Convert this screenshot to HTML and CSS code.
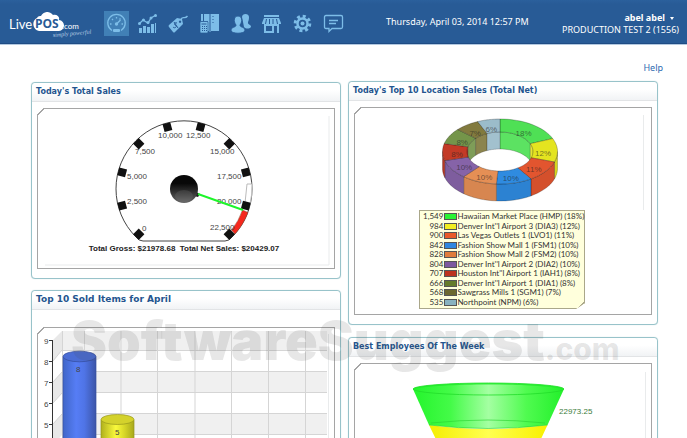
FILE: index.html
```html
<!DOCTYPE html>
<html lang="en">
<head>
<meta charset="utf-8">
<title>LivePOS Dashboard</title>
<link rel="stylesheet" href="styles.css">
</head>
<body>
<header class="topbar">
  <a class="logo" href="#" aria-label="LivePOS.com">
    <svg width="84" height="32" viewBox="8 9 84 32">
      <path fill="#fff" d="M39 31a7 7 0 0 1-2-13c1-2 3-2 4-2a7 7 0 0 1 12-1c4-1 7 2 6 5a5.500 5.500 0 0 1-1 11z"/>
      <text class="logo-word" x="9" y="29">Live</text>
      <text class="logo-pos" x="35" y="28">POS</text>
      <text class="logo-com" x="62" y="29">.com</text>
      <text class="logo-tag" x="53" y="37" transform="rotate(-5 53 37)">simply powerful</text>
    </svg>
  </a>
  <nav class="nav">
    <a class="nav-item active" href="#" aria-label="Dashboard"><svg viewBox="0 0 25 25"><path class="line" d="M8 19.500a8.700 8.700 0 1 1 9 0M12.500 13l4-4M6 13h1.500M17.500 13H19M8 8l1 1M12.500 6v1.500M16.500 7.500l-1 1"/><circle cx="12.500" cy="13" r="1.700"/><rect x="9" y="18" width="7" height="3" rx="1"/></svg></a>
    <a class="nav-item" href="#" aria-label="Sales"><svg viewBox="0 0 25 25"><path d="M4 17h3v5H4zM8 15h3v7H8zM12 16h3v6h-3zM16 13h3v9h-3zM20 12h1v10h-1z"/><path class="line" d="M4 13l4-4 5 3 3-5 5-3"/><circle cx="4.500" cy="12.500" r="1.500"/><circle cx="8.500" cy="9" r="1.500"/><circle cx="13" cy="11.500" r="1.500"/><circle cx="16" cy="7" r="1.500"/><circle cx="20.500" cy="4.500" r="1.500"/></svg></a>
    <a class="nav-item" href="#" aria-label="Products"><svg viewBox="0 0 25 25"><path fill-rule="evenodd" d="M3 14l8-7 5 1 1 5-8 8q-1 1-2 0l-4-5q-1-1 0-2zm11-4.500a1.200 1.200 0 1 0 .1 0z"/><path class="line" d="M14.500 9c2-5 4 0 7-4"/><path class="cut" d="M11 12c-2-1-3 1-2 2s2 1 1 2-2 1-3 0M8 11l4 6"/></svg></a>
    <a class="nav-item" href="#" aria-label="Accounting"><svg viewBox="0 0 25 25"><path d="M4 3h8l1 1 1-1h8v17h-8l-1 1-1-1h-1V10H4z"/><path class="cut" d="M13 4v16M6.500 3v7M16 5v1M16 8v1M16 11v1"/><rect x="3" y="10.500" width="8" height="11.500" rx="1" stroke="#285b96" stroke-width=".7"/><path class="cut" d="M4.500 13h5M5 15.500h1M7 15.500h1M9 15.500h1M5 17.500h1M7 17.500h1M9 17.500h1M5 19.500h1M7 19.500h1M9 19.500h1"/></svg></a>
    <a class="nav-item" href="#" aria-label="Customers"><svg viewBox="0 0 25 25"><path d="M14 6c0-4 7-4 7 0s-1 4-1 6 3 1 3 4c-2 2-5 2-7 0z"/><path stroke="#285c98" d="M3 20c0-5 5-3 5-6-3-4-2-9 2-9s5 5 2 9c0 3 5 1 5 6-2 3-12 3-14 0z"/></svg></a>
    <a class="nav-item" href="#" aria-label="Stores"><svg viewBox="0 0 25 25"><path fill-rule="evenodd" d="M5 4h15v2H5zM5 7h15l2 5v1H3v-1zM5 13h15v9H5zM7 15v5h6v-5zM15 15v7h3v-7z"/><path class="cut" d="M7.500 8l-1 5M10.500 8v5M14 8v5M17.500 8l1 5"/></svg></a>
    <a class="nav-item" href="#" aria-label="Settings"><svg viewBox="0 0 25 25"><circle class="teeth" cx="12.500" cy="12.500" r="7.300"/><circle class="ring" cx="12.500" cy="12.500" r="5"/><circle cx="12.500" cy="12.500" r="2"/></svg></a>
    <a class="nav-item" href="#" aria-label="Messages"><svg viewBox="0 0 25 25"><path class="line" d="M5 4.500h15q1.500 0 1.500 1.500v10q0 1.500-1.500 1.500h-9l-3 3v-3H5Q3.500 17.500 3.500 16V6Q3.500 4.500 5 4.500zM8 9.500h9M8 12.500h7"/></svg></a>
  </nav>
  <time class="clock">Thursday, April 03, 2014 12:57 PM</time>
  <div class="account">
    <button class="user" type="button">abel abel <span class="caret"></span></button>
    <span class="store">PRODUCTION TEST 2 (1556)</span>
  </div>
</header>

<main class="page">
  <div class="help"><a href="#">Help</a></div>
  <div class="columns">
    <div class="column left">
      <section class="panel">
        <h2>Today's Total Sales</h2>
        <div class="frame">
          <svg class="chart" viewBox="38 108 296 159">
            <defs>
              <linearGradient id="hub" x1="0" y1="0" x2="0" y2="1"><stop offset=".3" stop-color="#080808"/><stop offset="1" stop-color="#666"/></linearGradient>
              <g id="tick"><rect x="180" y="120" width="8" height="8" fill="#111"/></g>
            </defs>
            <path class="faint" d="M329 115V264H45"/>
            <path fill="#fff" stroke="#444" d="M143 240Q139 240 136 236A68 68 0 1 1 232 236Q229 240 225 240Z"/>
            <path fill="#fff" stroke="#bbb" d="M247 183h5a68 68 0 0 1-2 20l-5-1z"/>
            <path fill="#f5281e" stroke="#844a30" stroke-width=".5" d="M242.500 209L248 211.500A68 68 0 0 1 235 233L231.500 229A62 62 0 0 0 242.500 209Z"/>
            <use href="#tick" transform="rotate(-135 184 188)"/><use href="#tick" transform="rotate(-105 184 188)"/><use href="#tick" transform="rotate(-75 184 188)"/><use href="#tick" transform="rotate(-45 184 188)"/><use href="#tick" transform="rotate(-15 184 188)"/><use href="#tick" transform="rotate(15 184 188)"/><use href="#tick" transform="rotate(45 184 188)"/><use href="#tick" transform="rotate(75 184 188)"/><use href="#tick" transform="rotate(105 184 188)"/><use href="#tick" transform="rotate(135 184 188)"/>
            <g class="scale">
              <text x="142" y="230">0</text><text x="127" y="203">2,500</text><text x="127" y="178">5,000</text><text x="135" y="153">7,500</text><text x="158" y="137">10,000</text><text x="186" y="137">12,500</text><text x="210" y="153">15,000</text><text x="217" y="178">17,500</text><text x="217" y="203">20,000</text><text x="210" y="229">22,500</text>
            </g>
            <path d="M196 191l4 2-2 3-4-1z" fill="#222"/>
            <path d="M198 193L243 209" stroke="#1df52a" stroke-width="2"/>
            <circle cx="184" cy="188" r="14" fill="url(#hub)"/>
            <ellipse cx="184" cy="195" rx="9" ry="6" fill="#888" opacity=".2"/>
            <text class="totals" x="184" y="250" text-anchor="middle" xml:space="preserve">Total Gross: $21978.68  Total Net Sales: $20429.07</text>
          </svg>
        </div>
      </section>
      <section class="panel roomy">
        <h2>Top 10 Sold Items for April</h2>
        <div class="frame">
          <svg class="chart" viewBox="38 328 296 190">
            <defs>
              <linearGradient id="blue"><stop offset="0" stop-color="#4066c8"/><stop offset=".4" stop-color="#567df5"/><stop offset=".65" stop-color="#4f74e6"/><stop offset="1" stop-color="#3c55a8"/></linearGradient>
              <linearGradient id="yellow"><stop offset="0" stop-color="#b0b01c"/><stop offset=".45" stop-color="#fafa3c"/><stop offset=".7" stop-color="#d8d828"/><stop offset="1" stop-color="#a8a81c"/></linearGradient>
            </defs>
            <path fill="#f0f0f0" d="M62 331H327V350H62zM62 372H327V393H62zM62 414H327V435H62zM62 456H327V477H62z"/>
            <path fill="#e8e8e8" d="M53 340L62 331V350L53 361zM53 382L62 372V393L53 403zM53 424L62 414V435L53 445z"/>
            <path fill="none" stroke="#d5d5d5" d="M62.500 331V510M62 350.500H327M62 371.500H327M62 392.500H327M62 413.500H327M62 434.500H327M84.500 331V510M121 331V510M157.500 331V510M195 331V510M231.500 331V510M268.500 331V510M305.500 331V510M53 361L62 350M53 382L62 372M53 403L62 393M53 424L62 414"/>
            <path class="faint" d="M328.500 334V510"/>
            <path fill="none" stroke="#333" d="M52.500 340V510M49 340.500h3M49 361.500h3M49 382.500h3M49 403.500h3M49 424.500h3"/>
            <g class="scale"><text x="44" y="344">9</text><text x="44" y="365">8</text><text x="44" y="386">7</text><text x="44" y="407">6</text><text x="44" y="428">5</text></g>
            <path fill="url(#blue)" stroke="#3850a0" stroke-width=".7" d="M63 357V510H96V357z"/>
            <ellipse cx="79.500" cy="356.500" rx="16.500" ry="5.300" fill="#4a6cd4" stroke="#334c9c" stroke-width=".7"/>
            <path fill="url(#yellow)" stroke="#96961c" stroke-width=".7" d="M101 420V510H134V420z"/>
            <ellipse cx="117.500" cy="419.500" rx="16.500" ry="5" fill="#d4d22c" stroke="#96961c" stroke-width=".7"/>
            <g class="scale"><text x="76" y="372">8</text><text x="115" y="435">5</text></g>
          </svg>
        </div>
      </section>
    </div>

    <div class="column right">
      <section class="panel">
        <h2>Today's Top 10 Location Sales (Total Net)</h2>
        <div class="frame">
          <svg class="chart" id="donut" viewBox="355 108 296 102"></svg>
          <table class="legend" aria-label="Location sales">
            <tbody>
              <tr><td>1,549</td><td><i class="swatch c1"></i></td><td>Hawaiian Market Place (HMP) (18%)</td></tr>
              <tr><td>984</td><td><i class="swatch c2"></i></td><td>Denver Int''l Airport 3 (DIA3) (12%)</td></tr>
              <tr><td>900</td><td><i class="swatch c3"></i></td><td>Las Vegas Outlets 1 (LVO1) (11%)</td></tr>
              <tr><td>842</td><td><i class="swatch c4"></i></td><td>Fashion Show Mall 1 (FSM1) (10%)</td></tr>
              <tr><td>828</td><td><i class="swatch c5"></i></td><td>Fashion Show Mall 2 (FSM2) (10%)</td></tr>
              <tr><td>804</td><td><i class="swatch c6"></i></td><td>Denver Int''l Airport 2 (DIA2) (10%)</td></tr>
              <tr><td>707</td><td><i class="swatch c7"></i></td><td>Houston Int''l Airport 1 (IAH1) (8%)</td></tr>
              <tr><td>666</td><td><i class="swatch c8"></i></td><td>Denver Int''l Airport 1 (DIA1) (8%)</td></tr>
              <tr><td>568</td><td><i class="swatch c9"></i></td><td>Sawgrass Mills 1 (SGM1) (7%)</td></tr>
              <tr><td>535</td><td><i class="swatch c10"></i></td><td>Northpoint (NPM) (6%)</td></tr>
            </tbody>
          </table>
        </div>
      </section>
      <section class="panel">
        <h2>Best Employees Of The Week</h2>
        <div class="frame">
          <svg class="chart" viewBox="355 363 296 150">
            <defs>
              <linearGradient id="green"><stop offset="0" stop-color="#24f52c"/><stop offset=".25" stop-color="#44fb48"/><stop offset=".5" stop-color="#a4ffa2"/><stop offset=".75" stop-color="#50fb50"/><stop offset="1" stop-color="#22f02a"/></linearGradient>
              <linearGradient id="lemon"><stop offset="0" stop-color="#f4ee00"/><stop offset=".5" stop-color="#ffff50"/><stop offset="1" stop-color="#f8f000"/></linearGradient>
            </defs>
            <path class="faint" d="M645.500 371V505"/>
            <path fill="url(#lemon)" d="M429 424Q488 432 547.500 424L512 500H466z"/>
            <path fill="url(#green)" d="M413 388L429 424Q488 431 547.500 424L564 388z"/>
            <path fill="none" stroke="#28d030" stroke-width=".6" d="M429 424Q488 431 547.500 424M431 422Q488 416 545 422"/>
            <ellipse cx="488.500" cy="388" rx="75.500" ry="6" fill="url(#green)" stroke="#22dd2a" stroke-width=".8"/>
            <path fill="#1fe929" opacity=".8" d="M413 388C425 380 552 380 564 388C540 382 437 382 413 388z"/>
            <text class="value" x="559" y="413">22973.25</text>
          </svg>
        </div>
      </section>
    </div>
  </div>
  <div class="watermark" aria-hidden="true">SoftwareSuggest<span>.com</span></div>
</main>
<script src="donut.js"></script>
</body>
</html>
```
FILE: donut.js
```js
// Draws the location sales donut as a ring with depth.
const slices = [
  [1549, '#4fe055', '18%'], [984, '#e4e420', '12%'], [900, '#e2552f', '11%'],
  [842, '#2f8be0', '10%'], [828, '#e58f55', '10%'], [804, '#8663a8', '10%'],
  [707, '#c33a26', '8%'], [666, '#74954a', '8%'], [568, '#827a3e', '7%'],
  [535, '#9bbcca', '6%']
];
const cx = 500, cy = 151.5, depth = 17;
const outer = [57.5, 32.5], inner = [33, 19.5];
const total = slices.reduce((sum, s) => sum + s[0], 0);

const point = (r, a, dy = 0) => [cx + r[0] * Math.sin(a), cy - r[1] * Math.cos(a) + dy];
const arc = (r, from, to, dy) => {
  const pts = [];
  for (let i = 0; i <= 16; i++) pts.push(point(r, from + (to - from) * i / 16, dy));
  return pts;
};
const shape = (pts, fill, extra = '') =>
  `<polygon points="${pts.map(p => p.map(v => v.toFixed(1)).join()).join(' ')}" fill="${fill}" ${extra}/>`;

let angle = 0, inside = '', walls = '', tops = '', labels = '';
for (const [value, color, label] of slices) {
  const end = angle + value / total * Math.PI * 2;
  const edge = 'stroke="#000" stroke-opacity=".3" stroke-width=".7"';

  // The inner wall shows at the back of the ring, the outer wall at the front.
  const back = [[0, Math.PI / 2], [Math.PI * 1.5, Math.PI * 2]];
  for (const [lo, hi] of back) {
    const a = Math.max(angle, lo), b = Math.min(end, hi);
    if (a < b) {
      const pts = [...arc(inner, a, b, 0), ...arc(inner, b, a, depth)];
      inside += shape(pts, color, edge) + shape(pts, '#fff', 'opacity=".08"');
    }
  }
  const a = Math.max(angle, Math.PI / 2), b = Math.min(end, Math.PI * 1.5);
  if (a < b) {
    const pts = [...arc(outer, a, b, 0), ...arc(outer, b, a, depth)];
    walls += shape(pts, color, edge) + shape(pts, '#000', 'opacity=".06"');
  }
  tops += shape([...arc(outer, angle, end, 0), ...arc(inner, end, angle, 0)], color,
    'stroke="#000" stroke-opacity=".35" stroke-width=".7"');
  const mid = (angle + end) / 2;
  const [x, y] = point([43, 25], mid, 5);
  labels += `<text class="percent" x="${x.toFixed(1)}" y="${y.toFixed(1)}">${label}</text>`;
  angle = end;
}
document.getElementById('donut').innerHTML =
  '<path class="faint" d="M362 211H643M643.5 115V211"/>' + inside + walls + tops + labels;
```
FILE: styles.css
```css
* { box-sizing: border-box; }
body {
  margin: 0;
  height: 100vh;
  overflow: hidden;
  background: #fff;
  font-family: "Noto Sans", sans-serif;
  font-size: 9px;
}
a { text-decoration: none; }
.topbar {
  display: flex;
  align-items: flex-start;
  height: 45px;
  padding: 0 8px;
  background: linear-gradient(#2b609c, #285b96 4px, #285b96);
  border-bottom: 1px solid #b3c9e0;
  box-shadow: inset 0 -1px #1f4c84;
  color: #fff;
}
.logo { margin-top: 9px; }
.logo svg { display: block; }
.logo-word { font: 13px Lato, sans-serif; fill: #fff; }
.logo-pos { font: bold 12px "Open Sans", sans-serif; fill: #285b96; }
.logo-com { font: 8px Lato, sans-serif; fill: #fff; }
.logo-tag { font: italic 6px "Liberation Serif", serif; fill: #b7cbe3; }
.nav { display: flex; gap: 6px; margin: 11px 0 0 12px; }
.nav-item { width: 25px; height: 25px; }
.nav-item.active { background: #4180b6; }
.nav-item svg { display: block; width: 25px; height: 25px; fill: #7dbde8; }
.nav-item .line { fill: none; stroke: #7dbde8; stroke-width: 1.3; }
.nav-item .cut { fill: none; stroke: #285b96; stroke-width: 1; }
.nav-item .teeth { fill: none; stroke: #7dbde8; stroke-width: 3; stroke-dasharray: 3 2.730; }
.nav-item .ring { fill: none; stroke: #7dbde8; stroke-width: 2.500; }
.clock { margin: 16px 0 0 40px; line-height: 12px; white-space: nowrap; }
.account {
  display: flex;
  flex-direction: column;
  align-items: flex-end;
  margin: 12px 0 0 auto;
  white-space: nowrap;
}
.user {
  display: flex;
  align-items: center;
  gap: 5px;
  margin: 0 5px 0 0;
  padding: 0;
  border: 0;
  background: none;
  color: #fff;
  font: bold 9px/12px "Noto Sans", sans-serif;
}
.caret { border: 2px solid transparent; border-top: 3px solid #fff; border-bottom: 0; }
.store { line-height: 12px; }

.page { position: relative; padding: 17px 29px 0 31px; }
.help { height: 19px; padding-right: 24px; margin-right: -29px; text-align: right; line-height: 12px; }
.help a { color: #2d6bb0; }
.columns { display: grid; grid-template-columns: 1fr 1fr; gap: 7px; align-items: start; }
.column { display: grid; gap: 12px; }
.left { padding-top: 1px; gap: 11px; }
.panel {
  padding-bottom: 9px;
  border: 1px solid #98c3ca;
  border-radius: 4px;
  box-shadow: 0 0 1px #b5d5d8;
  background: #fff;
}
h2 {
  margin: 0 0 6px;
  padding: 0 4px;
  height: 19px;
  border-bottom: 1px solid #e2e4e6;
  border-radius: 4px 4px 0 0;
  background: linear-gradient(#fff 40%, #f1f3f5);
  color: #24558f;
  font: bold 8px/17px "DejaVu Sans", sans-serif;
}
.roomy h2 { margin-bottom: 17px; font-size: 9px; }
.frame { position: relative; margin: 0 5px; border: 1px solid #a5a5a5; }
.frame::before {
  content: "";
  position: absolute;
  top: -1px;
  left: -1px;
  width: 7px;
  height: 7px;
  background: linear-gradient(135deg, #fff 46%, #a5a5a5 46%, #a5a5a5 58%, #fff 58%);
}
.chart { display: block; width: 100%; height: auto; }
.chart text { font-family: "Liberation Sans", sans-serif; }
.faint { fill: none; stroke: #e9ebec; }
.scale { font-size: 8px; fill: #444; }
.totals { font-size: 8px; font-weight: bold; fill: #222; white-space: pre; }
.percent { font-size: 8px; fill: #222; fill-opacity: .6; text-anchor: middle; }
.value { font-size: 8px; fill: #3c7c3c; }

.legend {
  position: relative;
  width: 163px;
  height: 99px;
  margin: 0 auto 5px 64px;
  padding: 1px 0 1px 3px;
  border: 1px solid #aaa78a;
  border-spacing: 0;
  background: #ffffdc;
  clip-path: polygon(0 0, 100% 0, 100% 93px, 157px 100%, 0 100%);
  color: #333;
  font: 8px/9px Lato, sans-serif;
}
.legend::after {
  content: "";
  position: absolute;
  right: -1px;
  bottom: -1px;
  width: 7px;
  height: 7px;
  background: linear-gradient(135deg, transparent 42%, #aaa78a 42%, #aaa78a 54%, transparent 54%);
}
.legend td { padding: 0; white-space: nowrap; }
.legend td:first-child { width: 19px; text-align: right; }
.legend td:nth-child(2) { width: 15px; padding-left: 1px; }
.swatch { display: block; width: 13px; height: 7px; border: 1px solid #555; }
.c1 { background: #2af334; }
.c2 { background: #f2ee22; }
.c3 { background: #e85a2c; }
.c4 { background: #2f86e0; }
.c5 { background: #e07c3c; }
.c6 { background: #7c579e; }
.c7 { background: #bc3220; }
.c8 { background: #647a2c; }
.c9 { background: #6c6830; }
.c10 { background: #88b2c0; }

.watermark {
  position: absolute;
  top: 266px;
  left: 71px;
  color: rgba(70, 70, 70, .13);
  font: 900 54px/60px Inter, sans-serif;
  white-space: nowrap;
  pointer-events: none;
}
.watermark span { font-size: 30px; font-weight: 800; }
```
